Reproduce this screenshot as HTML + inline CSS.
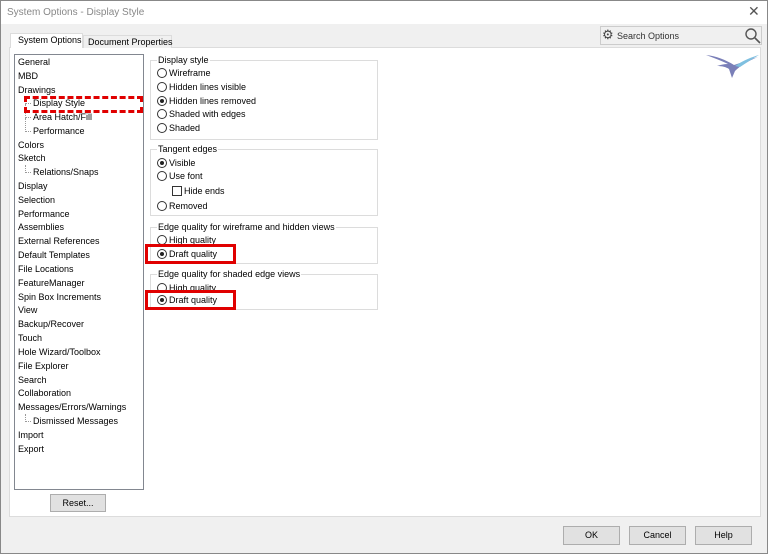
<!DOCTYPE html>
<html><head><style>
*{margin:0;padding:0;box-sizing:border-box}
body{width:768px;height:554px;background:#f0f0f0;font-family:"Liberation Sans",sans-serif;font-size:9px;color:#000;position:relative;overflow:hidden;font-variant-ligatures:none;font-feature-settings:"liga" 0}
.a{position:absolute;white-space:nowrap}
.t{line-height:11px}
.grp{position:absolute;border:1px solid #dcdcdc;background:#fff}
.lg{position:absolute;top:-6px;left:6px;background:#fff;padding:0 1px;line-height:11px}
.r{position:absolute;width:10px;height:10px;border:1px solid #333;border-radius:50%;background:#fff}
.r.on::after{content:"";position:absolute;left:2px;top:2px;width:4px;height:4px;border-radius:50%;background:#222}
.btn{position:absolute;background:#e1e1e1;border:1px solid #adadad;text-align:center;line-height:16px}
.tl{position:absolute;border-left:1px dotted #999;border-bottom:1px dotted #999}
</style></head><body>
<div class="a" style="left:0;top:0;width:768px;height:24px;background:#fff;border:1px solid #888;border-bottom:none"></div>
<div class="a t" style="left:7px;top:7px;color:#888;font-size:10px">System Options - Display Style</div>
<div class="a" style="left:748px;top:3px;font-size:14px;color:#555">✕</div>
<div class="a" style="left:0;top:24px;width:1px;height:530px;background:#888"></div>
<div class="a" style="left:767px;top:24px;width:1px;height:530px;background:#888"></div>
<div class="a" style="left:9px;top:47px;width:752px;height:470px;background:#fff;border:1px solid #dcdcdc"></div>
<div class="a" style="left:10px;top:33px;width:73px;height:15px;background:#fff;border:1px solid #dcdcdc;border-bottom:none"></div>
<div class="a t" style="left:18px;top:35px">System Options</div>
<div class="a" style="left:83px;top:35px;width:89px;height:13px;background:#f0f0f0;border:1px solid #dcdcdc;border-bottom:none"></div>
<div class="a t" style="left:88px;top:37px">Document Properties</div>
<div class="a" style="left:600px;top:26px;width:162px;height:19px;background:#f0f0f0;border:1px solid #ccc"></div>
<div class="a" style="left:602px;top:27px;font-size:13px;color:#444">⚙</div>
<div class="a t" style="left:617px;top:31px;color:#333">Search Options</div>
<svg class="a" style="left:744px;top:27px" width="17" height="17"><circle cx="7" cy="7" r="5" fill="none" stroke="#555" stroke-width="1.4"/><line x1="11" y1="11" x2="16" y2="16" stroke="#555" stroke-width="1.6"/></svg>
<svg class="a" style="left:704px;top:52px" width="56" height="30"><path d="M2 3 C10 6 18 9 24 12 C20 12 16 13 13 14 C18 14 22 15 25 17 L28 26 L31 19 C36 14 44 9 54 5 C44 8 36 11 30 13 C22 8 12 4 2 3Z" fill="#7a7fb8"/><path d="M31 14 C40 8 48 5 55 3 C48 7 42 11 36 15Z" fill="#7fc0e0"/></svg>
<div class="a" style="left:14px;top:54px;width:130px;height:436px;border:1px solid #828790;background:#fff"></div>
<div class="a t" style="left:18px;top:57px">General</div>
<div class="a t" style="left:18px;top:71px">MBD</div>
<div class="a t" style="left:18px;top:85px">Drawings</div>
<div class="a t" style="left:33px;top:98px">Display Style</div>
<div class="a t" style="left:33px;top:112px"><span>Area Hatch/F</span><span>ill</span></div>
<div class="a t" style="left:33px;top:126px">Performance</div>
<div class="a t" style="left:18px;top:140px">Colors</div>
<div class="a t" style="left:18px;top:153px">Sketch</div>
<div class="a t" style="left:33px;top:167px">Relations/Snaps</div>
<div class="a t" style="left:18px;top:181px">Display</div>
<div class="a t" style="left:18px;top:195px">Selection</div>
<div class="a t" style="left:18px;top:209px">Performance</div>
<div class="a t" style="left:18px;top:222px">Assemblies</div>
<div class="a t" style="left:18px;top:236px">External References</div>
<div class="a t" style="left:18px;top:250px">Default Templates</div>
<div class="a t" style="left:18px;top:264px">File Locations</div>
<div class="a t" style="left:18px;top:278px">FeatureManager</div>
<div class="a t" style="left:18px;top:292px">Spin Box Increments</div>
<div class="a t" style="left:18px;top:305px">View</div>
<div class="a t" style="left:18px;top:319px">Backup/Recover</div>
<div class="a t" style="left:18px;top:333px">Touch</div>
<div class="a t" style="left:18px;top:347px">Hole Wizard/Toolbox</div>
<div class="a t" style="left:18px;top:361px">File Explorer</div>
<div class="a t" style="left:18px;top:375px">Search</div>
<div class="a t" style="left:18px;top:388px">Collaboration</div>
<div class="a t" style="left:18px;top:402px">Messages/Errors/Warnings</div>
<div class="a t" style="left:33px;top:416px">Dismissed Messages</div>
<div class="a t" style="left:18px;top:430px">Import</div>
<div class="a t" style="left:18px;top:444px">Export</div>
<div class="tl" style="left:25px;top:96px;width:6px;height:8px"></div>
<div class="tl" style="left:25px;top:104px;width:6px;height:14px"></div>
<div class="tl" style="left:25px;top:118px;width:6px;height:14px"></div>
<div class="tl" style="left:25px;top:165px;width:6px;height:8px"></div>
<div class="tl" style="left:25px;top:414px;width:6px;height:8px"></div>
<div class="a" style="left:24px;top:96px;width:119px;height:17px;border:3px dashed #e00000"></div>
<div class="btn" style="left:50px;top:494px;width:56px;height:18px">Reset...</div>
<div class="grp" style="left:150px;top:60px;width:228px;height:80px"><span class="lg">Display style</span></div>
<div class="r" style="left:157px;top:68px"></div><div class="a t" style="left:169px;top:68px">Wireframe</div>
<div class="r" style="left:157px;top:82px"></div><div class="a t" style="left:169px;top:82px">Hidden lines visible</div>
<div class="r on" style="left:157px;top:96px"></div><div class="a t" style="left:169px;top:96px">Hidden lines removed</div>
<div class="r" style="left:157px;top:109px"></div><div class="a t" style="left:169px;top:109px">Shaded with edges</div>
<div class="r" style="left:157px;top:123px"></div><div class="a t" style="left:169px;top:123px">Shaded</div>
<div class="grp" style="left:150px;top:149px;width:228px;height:67px"><span class="lg">Tangent edges</span></div>
<div class="r on" style="left:157px;top:158px"></div><div class="a t" style="left:169px;top:158px">Visible</div>
<div class="r" style="left:157px;top:171px"></div><div class="a t" style="left:169px;top:171px">Use font</div>
<div class="a" style="left:172px;top:186px;width:10px;height:10px;border:1px solid #333;background:#fff"></div><div class="a t" style="left:184px;top:186px">Hide ends</div>
<div class="r" style="left:157px;top:201px"></div><div class="a t" style="left:169px;top:201px">Removed</div>
<div class="grp" style="left:150px;top:227px;width:228px;height:37px"><span class="lg">Edge quality for wireframe and hidden views</span></div>
<div class="r" style="left:157px;top:235px"></div><div class="a t" style="left:169px;top:235px">High quality</div>
<div class="r on" style="left:157px;top:249px"></div><div class="a t" style="left:169px;top:249px">Draft quality</div>
<div class="grp" style="left:150px;top:274px;width:228px;height:36px"><span class="lg">Edge quality for shaded edge views</span></div>
<div class="r" style="left:157px;top:283px"></div><div class="a t" style="left:169px;top:283px">High quality</div>
<div class="r on" style="left:157px;top:295px"></div><div class="a t" style="left:169px;top:295px">Draft quality</div>
<div class="a" style="left:145px;top:244px;width:91px;height:20px;border:3px solid #e00000"></div>
<div class="a" style="left:145px;top:290px;width:91px;height:20px;border:3px solid #e00000"></div>
<div class="btn" style="left:563px;top:526px;width:57px;height:19px;line-height:17px">OK</div>
<div class="btn" style="left:629px;top:526px;width:57px;height:19px;line-height:17px">Cancel</div>
<div class="btn" style="left:695px;top:526px;width:57px;height:19px;line-height:17px">Help</div>
<div class="a" style="left:0;top:553px;width:768px;height:1px;background:#888"></div>
</body></html>
